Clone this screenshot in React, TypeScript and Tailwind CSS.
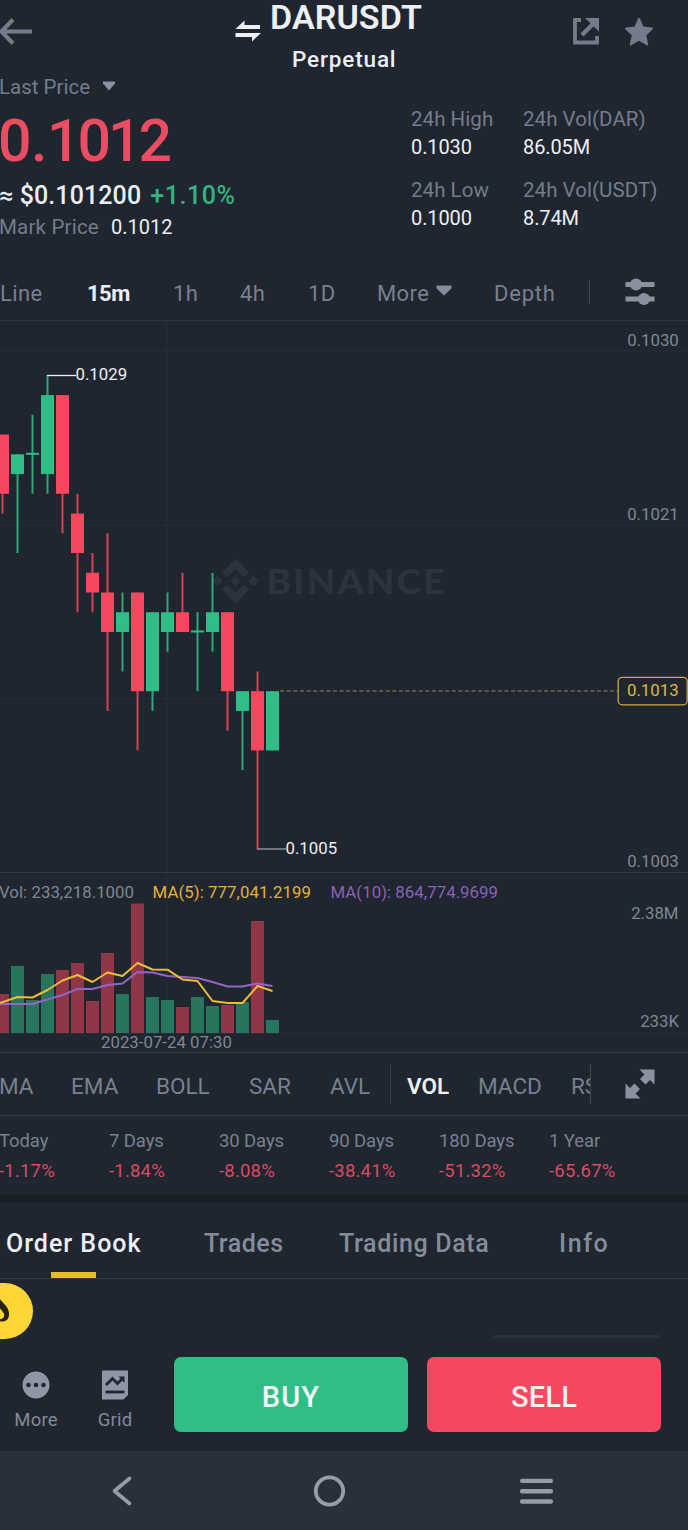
import type { ReactNode } from "react";

type Candle = {
  open: number;
  close: number;
  high: number;
  low: number;
  volume: number;
  up: boolean;
};

const UP = "#30bd86";
const DOWN = "#f5475d";

// prices are in ticks of 0.0001
const CANDLES: Candle[] = [
  { open: 1026, close: 1023, high: 1026, low: 1022, volume: 39, up: false },
  { open: 1024, close: 1025, high: 1025, low: 1020, volume: 67, up: true },
  { open: 1025, close: 1025, high: 1027, low: 1023, volume: 33, up: true },
  { open: 1024, close: 1028, high: 1029, low: 1023, volume: 59, up: true },
  { open: 1028, close: 1023, high: 1028, low: 1021, volume: 63, up: false },
  { open: 1022, close: 1020, high: 1023, low: 1017, volume: 70, up: false },
  { open: 1019, close: 1018, high: 1020, low: 1017, volume: 32, up: false },
  { open: 1018, close: 1016, high: 1021, low: 1012, volume: 80, up: false },
  { open: 1016, close: 1017, high: 1018, low: 1014, volume: 39, up: true },
  { open: 1018, close: 1013, high: 1018, low: 1010, volume: 129.5, up: false },
  { open: 1013, close: 1017, high: 1017, low: 1012, volume: 36, up: true },
  { open: 1016, close: 1017, high: 1018, low: 1015, volume: 33, up: true },
  { open: 1017, close: 1016, high: 1019, low: 1016, volume: 26, up: false },
  { open: 1016, close: 1016, high: 1017, low: 1013, volume: 36, up: true },
  { open: 1016, close: 1017, high: 1019, low: 1015, volume: 27, up: true },
  { open: 1017, close: 1013, high: 1017, low: 1011, volume: 28, up: false },
  { open: 1012, close: 1013, high: 1013, low: 1009, volume: 31, up: true },
  { open: 1013, close: 1010, high: 1014, low: 1005, volume: 112, up: false },
  { open: 1010, close: 1013, high: 1013, low: 1010, volume: 13, up: true },
];

const MA5 = [30, 36, 35.5, 43, 52.5, 58, 51, 60.5, 57, 70, 63.5, 63.3, 53.5, 52, 32, 30, 30, 47, 42];
const MA10 = [29, 29, 29, 33.5, 38, 44, 44, 48, 49.5, 61, 60.5, 57, 56, 55, 51, 46.5, 46.5, 49.5, 47];

const INTERVALS = [
  { label: "Line", className: "w-[87px]" },
  { label: "15m", className: "w-[86px] font-bold text-[#eceff5] tracking-[-0.5px]" },
  { label: "1h", className: "w-[67px]" },
  { label: "4h", className: "w-[68px]" },
  { label: "1D", className: "w-[69px]" },
];

const CHANGES = [
  { label: "Today", value: "-1.17%" },
  { label: "7 Days", value: "-1.84%" },
  { label: "30 Days", value: "-8.08%" },
  { label: "90 Days", value: "-38.41%" },
  { label: "180 Days", value: "-51.32%" },
  { label: "1 Year", value: "-65.67%" },
];

const VOLUME_BASE = 713;

const candleX = (i: number) => 2.5 + i * 15;
const priceY = (p: number) => 371.2 - (p - 1013) * 19.74;
const maPoints = (values: number[]) =>
  values.map((v, i) => `${i === 0 ? 0 : candleX(i)},${VOLUME_BASE - v}`).join(" ");

function Header() {
  return (
    <header className="flex h-[74px] shrink-0 text-[#eceff5]">
      <div className="w-[235px] pt-[18px]">
        <svg width="32" height="27" viewBox="0 0 32 27" fill="none" stroke="#747b8b" strokeWidth="4.2">
          <path d="M32 13.5H2M13 1.5L1.5 13.5L13 25.5" />
        </svg>
      </div>
      <div className="w-[35px] pt-[20px]">
        <svg width="26" height="22" viewBox="0 0 26 22" fill="#eceff5">
          <path d="M25 9H0.5L9.5 0.5V5H25zM0.5 13H26L17 21.5V17H0.5z" />
        </svg>
      </div>
      <div className="w-[303px]">
        <h1 className="text-[34px] leading-[35px] font-semibold tracking-[0.1px]">DARUSDT</h1>
        <p className="mt-[10px] pl-[22px] text-[22.5px] leading-7 font-medium tracking-[0.85px]">
          Perpetual
        </p>
      </div>
      <div className="flex gap-[25px] pt-[17px]">
        <svg className="mt-px" width="26" height="27" viewBox="0 0 26 27" fill="none" stroke="#747b8b" strokeWidth="3.8">
          <path d="M8 2H2V24.5H24V18" />
          <path d="M9 17L20 6" strokeWidth="4.4" />
          <path d="M12 0H26V13.5z" fill="#747b8b" stroke="none" />
        </svg>
        <svg width="30" height="30" viewBox="0 0 30 30" fill="#747b8b" stroke="#747b8b" strokeWidth="2" strokeLinejoin="round">
          <path d="M15 2L18.8 10.6L28 11.6L21.2 17.9L23.2 27.5L15 22.7L6.8 27.5L8.8 17.9L2 11.6L11.2 10.6z" />
        </svg>
      </div>
    </header>
  );
}

function Stat({ label, value }: { label: string; value: string }) {
  return (
    <div className="h-[71px]">
      <p className="text-[20.5px] leading-6 tracking-[0.05px] text-[#757c8b]">{label}</p>
      <p className="mt-1 text-[20px] leading-6 tracking-[-0.1px] text-[#eceff5]">{value}</p>
    </div>
  );
}

function PriceSummary() {
  return (
    <section className="flex h-[191px] shrink-0">
      <div className="w-[411px]">
        <div className="flex items-center gap-[13px] pt-px text-[20.5px] leading-6 text-[#757c8b]">
          <span className="-ml-px">Last Price</span>
          <svg className="-mt-0.5" width="12" height="10" viewBox="0 0 12 10" fill="#8a91a0">
            <path d="M0 0.5H12V2.5L6 9.5L0 2.5z" />
          </svg>
        </div>
        <p className="mt-[12px] -ml-[2px] text-[59px] leading-[60px] font-medium tracking-[-3px] text-[#ea4c62]">
          0<span className="mx-[2.5px]">.</span>1012
        </p>
        <p className="mt-[10px] flex gap-[9px] text-[25px] leading-[30px] font-medium text-[#eceff5]">
          <span className="-ml-px tracking-[0.1px]">≈ $0.101200</span>
          <span className="tracking-[0.55px] text-[#35b381]">+1.10%</span>
        </p>
        <p className="mt-[4px] flex gap-[12px] text-[20.5px] leading-6">
          <span className="-ml-px tracking-[0.2px] text-[#757c8b]">Mark Price</span>
          <span className="text-[20px] text-[#eceff5]">0.1012</span>
        </p>
      </div>
      <div className="grid flex-1 grid-cols-[112px_1fr] content-start pt-[33px]">
        <Stat label="24h High" value="0.1030" />
        <Stat label="24h Vol(DAR)" value="86.05M" />
        <Stat label="24h Low" value="0.1000" />
        <Stat label="24h Vol(USDT)" value="8.74M" />
      </div>
    </section>
  );
}

function IntervalBar() {
  return (
    <nav className="flex h-14 shrink-0 items-center border-b border-[#2c343e] pt-0.5 text-[22px] tracking-[0.4px] text-[#79808e]">
      {INTERVALS.map((item) => (
        <span key={item.label} className={item.className}>
          {item.label}
        </span>
      ))}
      <span className="flex w-[117px] items-center gap-[7px]">
        More
        <svg className="-mt-1.5" width="16" height="11" viewBox="0 0 16 11" fill="#858c9a">
          <path d="M0.5 0.5H15.5V3.5L8 10.5L0.5 3.5z" />
        </svg>
      </span>
      <span className="w-[95px] tracking-[0.8px]">Depth</span>
      <span className="-mt-[3px] h-6 w-[36px] border-l border-[#414853]" />
      <svg className="-mt-1" width="30" height="28" viewBox="0 0 30 28" fill="#8a92a0">
        <path d="M0.5 4H29.5V9H0.5zM0.5 18.5H29.5V23.5H0.5z" />
        <circle cx="11" cy="6.5" r="6" />
        <circle cx="19" cy="21" r="6" />
      </svg>
    </nav>
  );
}

function Chart() {
  return (
    <svg className="block shrink-0" width="688" height="731" viewBox="0 1 688 731" fontSize="16.8">
      <g stroke="#252c37">
        <path d="M0 31H688M0 205.5H688M0 378.5H688M167 0V713M0 713.5H688" />
        <path d="M0 552.5H688" stroke="#333b46" />
      </g>

      <g fill="#2c333f">
        <path d="M235.5 238.5L249 252.5L244 257.5L235.5 249L227 257.5L222 252.5z" />
        <path d="M235.5 283.5L249 269.5L244 264.5L235.5 273L227 264.5L222 269.5z" />
        <path d="M235.5 255.8L240.7 261L235.5 266.2L230.3 261zM217.5 255.8L222.7 261L217.5 266.2L212.3 261zM253.5 255.8L258.7 261L253.5 266.2L248.3 261z" />
        <text
          x="266.5"
          y="274"
          fontFamily="Lato"
          fontSize="34.5"
          fontWeight="900"
          letterSpacing="2"
          textLength="180"
          lengthAdjust="spacingAndGlyphs"
        >
          BINANCE
        </text>
      </g>

      {CANDLES.map((c, i) => {
        const x = candleX(i);
        const top = priceY(Math.max(c.open, c.close));
        const height = Math.abs(c.open - c.close) * 19.74;
        const color = c.up ? UP : DOWN;
        return (
          <g key={i} fill={color}>
            <rect
              x={x - 1}
              y={priceY(c.high)}
              width="2"
              height={priceY(c.low) - priceY(c.high)}
              opacity="0.85"
            />
            <rect x={x - 6.5} y={height === 0 ? top - 1.5 : top} width="13" height={height || 2} />
            <rect
              x={x - 6.5}
              y={VOLUME_BASE - c.volume}
              width="13"
              height={c.volume}
              opacity="0.53"
            />
          </g>
        );
      })}

      <g fill="none" strokeWidth="2" strokeLinejoin="round">
        <polyline points={maPoints(MA10)} stroke="#9264c4" />
        <polyline points={maPoints(MA5)} stroke="#f0bb35" />
      </g>

      <path d="M47 55.5H76" stroke="#eceff5" strokeWidth="1.3" />
      <path d="M257 529H286" stroke="#9da3ad" strokeWidth="1.3" />
      <g fill="#eceff5">
        <text x="75.5" y="60">0.1029</text>
        <text x="285.5" y="534">0.1005</text>
      </g>

      <path d="M280 371H618" stroke="#75613a" strokeWidth="1.6" strokeDasharray="4.3 2.3" />
      <rect x="618.2" y="357.3" width="69" height="27.5" rx="4" fill="#1f2630" stroke="#cfa93c" strokeWidth="1.3" />
      <text x="627" y="376" fill="#dcb843">0.1013</text>

      <g fill="#7f8693">
        <text x="627.2" y="26">0.1030</text>
        <text x="627.2" y="200">0.1021</text>
        <text x="627.2" y="547">0.1003</text>
        <text x="678.5" y="599" textAnchor="end">2.38M</text>
        <text x="679" y="707" textAnchor="end">233K</text>
        <text x="101" y="728" textLength="131">2023-07-24 07:30</text>
        <text x="-1" y="578" textLength="135">Vol: 233,218.1000</text>
      </g>
      <text x="152.5" y="578" fill="#e0b23a" textLength="158.5">MA(5): 777,041.2199</text>
      <text x="330.5" y="578" fill="#8a62b8" textLength="167.5">MA(10): 864,774.9699</text>
    </svg>
  );
}

function IndicatorBar() {
  return (
    <nav className="flex h-16 shrink-0 items-center border-y border-[#333b46] text-[22.5px] text-[#79808e] [&>span]:pt-[6px]">
      <span className="-ml-px w-[72px]">MA</span>
      <span className="w-[85px]">EMA</span>
      <span className="w-[93px]">BOLL</span>
      <span className="w-[81px]">SAR</span>
      <span className="w-[60px]">AVL</span>
      <span className="flex h-10 w-[88px] items-center border-l border-[#333b46] pl-[16px] font-semibold text-[#eceff5]">
        VOL
      </span>
      <span className="w-[93px]">MACD</span>
      <span className="flex h-10 w-5 items-center overflow-hidden border-r border-[#414853]">RSI</span>
      <svg className="ml-[34px]" width="30" height="30" viewBox="0 0 30 30" fill="#8a92a0">
        <path d="M14.5 0.5H29.5V15.5L25 11L20.5 15.5L15 10L19.5 5.5z" />
        <path d="M0.5 14.5L5 19L9.5 14.5L15 20L10.5 24.5L15.5 29.5H0.5z" />
      </svg>
    </nav>
  );
}

function ChangeRow() {
  return (
    <section className="flex h-[78px] shrink-0 pt-[13px] text-[18.5px] leading-6">
      {CHANGES.map((c) => (
        <div key={c.label} className="-ml-px w-[111px] shrink-0">
          <p className="tracking-[-0.1px] text-[#79808e]">{c.label}</p>
          <p className="mt-[6px] tracking-[0.2px] text-[#d94b61]">{c.value}</p>
        </div>
      ))}
    </section>
  );
}

function BookTabs() {
  return (
    <nav className="flex h-[76px] shrink-0 border-b border-[#333b46] text-[25px] leading-[82px] font-medium text-[#858c9a]">
      <span className="relative w-[198px] pl-[6px] tracking-[1px] text-[#eceff5]">
        Order Book
        <span className="absolute bottom-0 left-[51px] h-1.5 w-[45px] bg-[#e8bb2f]" />
      </span>
      <span className="w-[141px] pl-[6px] tracking-[0.5px]">Trades</span>
      <span className="w-[220px] tracking-[0.65px]">Trading Data</span>
      <span className="tracking-[1.6px]">Info</span>
    </nav>
  );
}

function BookPeek() {
  return (
    <section className="flex h-[60px] shrink-0 items-start justify-between pt-1">
      <div className="flex h-14 w-[33px] items-center rounded-r-full bg-[#fdd535]">
        <svg width="10" height="24" viewBox="0 0 10 24" fill="#25231c">
          <path d="M0 0.3L6 7C9.8 11.5 9.8 17.5 7.5 20.3C6 22.3 3 22.8 0 22.5V20.3C3 20 4.6 17.8 4.2 15.5C3.5 13 1.5 11 0 9.5z" />
        </svg>
      </div>
      <div className="mt-[52px] mr-[28px] h-[3px] w-[167px] bg-[#29303b]" />
    </section>
  );
}

function ToolButton({ label, children }: { label: string; children: ReactNode }) {
  return (
    <button className="flex w-[79px] flex-col items-center text-[18.5px] leading-6 tracking-[0.2px] text-[#838a98]">
      <span className="flex h-[30px] items-center">{children}</span>
      <span className="mt-[8px] pl-px">{label}</span>
    </button>
  );
}

function ActionBar() {
  return (
    <section className="flex h-[112px] shrink-0 pt-[18px]">
      <div className="w-[174px] pt-[13px]">
        <div className="-ml-1 flex">
          <ToolButton label="More">
            <svg width="28" height="28" viewBox="0 0 28 28">
              <circle cx="14" cy="14" r="13.5" fill="#8f96a5" />
              <g fill="#1f2630">
                <circle cx="6.5" cy="14" r="2.3" />
                <circle cx="14" cy="14" r="2.3" />
                <circle cx="21.5" cy="14" r="2.3" />
              </g>
            </svg>
          </ToolButton>
          <ToolButton label="Grid">
            <svg width="26" height="30" viewBox="0 0 26 30">
              <path d="M0 0.5H26V25L21.5 29.5H0z" fill="#8f96a5" />
              <g fill="none" stroke="#1f2630" strokeWidth="2.8">
                <path d="M4 15L10.5 8.5L15.5 13.5L21 8" />
                <path d="M3.5 22H22.5" />
              </g>
              <path d="M16.5 6.5H22.5V13z" fill="#1f2630" />
            </svg>
          </ToolButton>
        </div>
      </div>
      <button className="h-[75px] w-[234px] rounded-[7px] bg-[#30bd86] pt-[6px] text-[29px] font-medium tracking-[1.2px] text-[#f1fbf7]">
        BUY
      </button>
      <button className="ml-[19px] h-[75px] w-[234px] rounded-[7px] bg-[#f5475d] pt-[6px] text-[29px] font-medium tracking-[0.2px] text-[#fdeff1]">
        SELL
      </button>
    </section>
  );
}

function SystemNav() {
  return (
    <nav className="flex h-[79px] shrink-0 items-center bg-[#2a303b]">
      <svg className="ml-[111px]" width="22" height="32" viewBox="0 0 22 32" fill="none" stroke="#989ca5" strokeWidth="3.6" strokeLinecap="round" strokeLinejoin="round">
        <path d="M18.5 3.5L3.5 16L18.5 28.5" />
      </svg>
      <svg className="ml-[180px]" width="34" height="34" viewBox="0 0 34 34" fill="none" stroke="#989ca5" strokeWidth="3.8">
        <circle cx="16.5" cy="17" r="13.7" />
      </svg>
      <svg className="ml-[173px]" width="33" height="26" viewBox="0 0 33 26" fill="#989ca5">
        <rect y="0.7" width="33" height="4.4" rx="2" />
        <rect y="11" width="33" height="4.4" rx="2" />
        <rect y="21.3" width="33" height="4.4" rx="2" />
      </svg>
    </nav>
  );
}

export default function App() {
  return (
    <main className="flex h-[1530px] w-[688px] flex-col overflow-hidden bg-[#1f2630] font-['Roboto',sans-serif]">
      <Header />
      <PriceSummary />
      <IntervalBar />
      <Chart />
      <IndicatorBar />
      <ChangeRow />
      <div className="h-[9px] shrink-0 bg-[#191f27]" />
      <BookTabs />
      <BookPeek />
      <ActionBar />
      <SystemNav />
    </main>
  );
}
